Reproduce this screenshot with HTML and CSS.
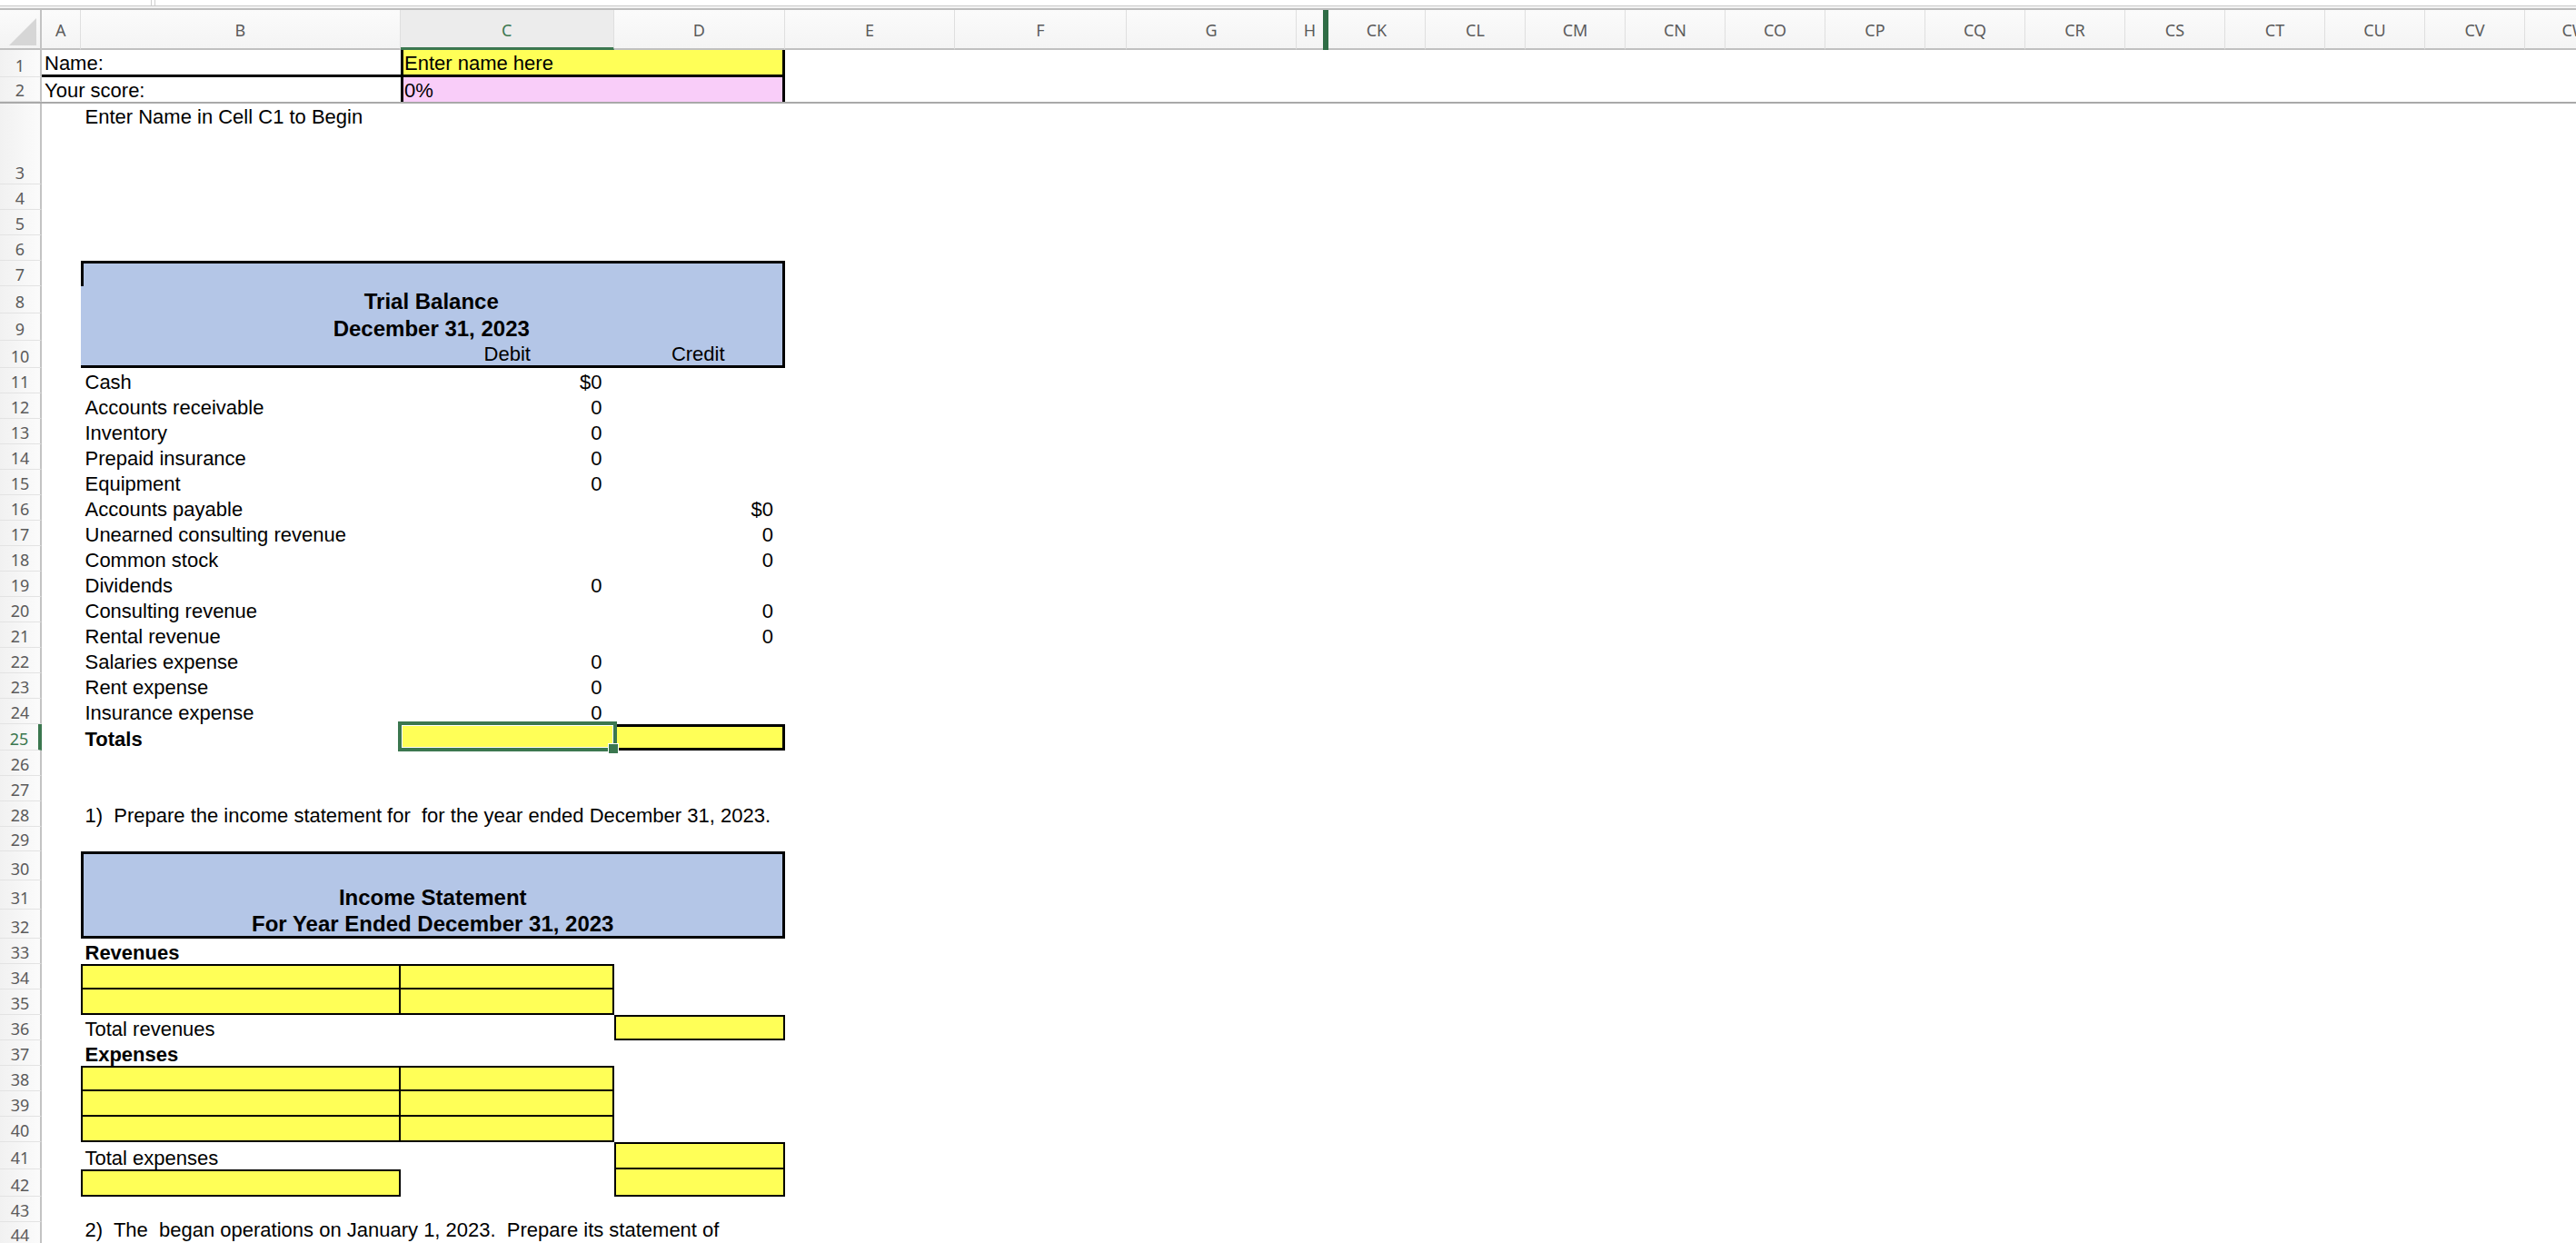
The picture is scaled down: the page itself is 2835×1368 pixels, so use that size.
FILE: index.html
```html
<!DOCTYPE html>
<html>
<head>
<meta charset="utf-8">
<link rel="stylesheet" href="styles.css">
</head>
<body>
<div class="app">
  <div class="topbar"><div class="tb-gap"></div><div class="tb-box"></div></div>
  <div class="frame"></div>
  <div class="colhead">
    <div class="corner"><svg width="46" height="42" viewBox="0 0 46 42"><polygon points="40,9 40,39 10,39" fill="#d6d6d6"/></svg></div>
    <div class="ch w-a">A</div>
    <div class="ch w-b">B</div>
    <div class="ch w-c sel">C</div>
    <div class="ch w-d">D</div>
    <div class="ch w-e">E</div>
    <div class="ch w-f">F</div>
    <div class="ch w-g">G</div>
    <div class="ch w-h">H</div>
    <div class="freeze-v"></div>
    <div class="ch w-ck">CK</div>
    <div class="ch w-x">CL</div>
    <div class="ch w-x">CM</div>
    <div class="ch w-x">CN</div>
    <div class="ch w-x">CO</div>
    <div class="ch w-x">CP</div>
    <div class="ch w-x">CQ</div>
    <div class="ch w-x">CR</div>
    <div class="ch w-x">CS</div>
    <div class="ch w-x">CT</div>
    <div class="ch w-x">CU</div>
    <div class="ch w-x">CV</div>
    <div class="ch w-x">CW</div>
  </div>

  <div class="sheet">
    <div class="r h30"><div class="rh">1</div><div class="cell ca pa bb3">Name:</div><div class="cell cb bb3"></div><div class="cell ccd yellow bl3 br3 bb3 pc">Enter name here</div></div>
    <div class="r h27"><div class="rh">2</div><div class="cell ca pa">Your score:</div><div class="cell ccd pink bl3 br3 pc">0%</div></div>
    <div class="freeze-h"></div>
    <div class="r h89"><div class="rh">3</div><div class="cell cb pb top">Enter Name in Cell C1 to Begin</div></div>
    <div class="r"><div class="rh">4</div></div>
    <div class="r"><div class="rh">5</div></div>
    <div class="r"><div class="rh">6</div></div>
    <div class="r"><div class="rh">7</div><div class="cell cbd blue hb-t hb-l hb-r"></div></div>
    <div class="r h30"><div class="rh">8</div><div class="cell cbd blue hb-r center title">Trial Balance</div></div>
    <div class="r h30"><div class="rh">9</div><div class="cell cbd blue hb-r center title">December 31, 2023</div></div>
    <div class="r h30"><div class="rh">10</div><div class="cell cb blue hb-b"></div><div class="cell cc blue hb-b center">Debit</div><div class="cell cd blue hb-b hb-r center">Credit</div></div>
    <div class="r"><div class="rh">11</div><div class="cell cb pb">Cash</div><div class="cell cc num">$0</div></div>
    <div class="r"><div class="rh">12</div><div class="cell cb pb">Accounts receivable</div><div class="cell cc num">0</div></div>
    <div class="r"><div class="rh">13</div><div class="cell cb pb">Inventory</div><div class="cell cc num">0</div></div>
    <div class="r"><div class="rh">14</div><div class="cell cb pb">Prepaid insurance</div><div class="cell cc num">0</div></div>
    <div class="r"><div class="rh">15</div><div class="cell cb pb">Equipment</div><div class="cell cc num">0</div></div>
    <div class="r"><div class="rh">16</div><div class="cell cb pb">Accounts payable</div><div class="cell cd num">$0</div></div>
    <div class="r"><div class="rh">17</div><div class="cell cb pb">Unearned consulting revenue</div><div class="cell cd num">0</div></div>
    <div class="r"><div class="rh">18</div><div class="cell cb pb">Common stock</div><div class="cell cd num">0</div></div>
    <div class="r"><div class="rh">19</div><div class="cell cb pb">Dividends</div><div class="cell cc num">0</div></div>
    <div class="r"><div class="rh">20</div><div class="cell cb pb">Consulting revenue</div><div class="cell cd num">0</div></div>
    <div class="r"><div class="rh">21</div><div class="cell cb pb">Rental revenue</div><div class="cell cd num">0</div></div>
    <div class="r"><div class="rh">22</div><div class="cell cb pb">Salaries expense</div><div class="cell cc num">0</div></div>
    <div class="r"><div class="rh">23</div><div class="cell cb pb">Rent expense</div><div class="cell cc num">0</div></div>
    <div class="r"><div class="rh">24</div><div class="cell cb pb">Insurance expense</div><div class="cell cc num">0</div></div>
    <div class="r h29"><div class="rh sel">25</div><div class="cell cb pb bold">Totals</div><div class="cell cc yellow active"><div class="selection"><div class="handle"></div></div></div><div class="cell cd tot"></div></div>
    <div class="r"><div class="rh">26</div></div>
    <div class="r"><div class="rh">27</div></div>
    <div class="r"><div class="rh">28</div><div class="cell cb pb">1)  Prepare the income statement for  for the year ended December 31, 2023.</div></div>
    <div class="r h27"><div class="rh">29</div></div>
    <div class="r h32"><div class="rh">30</div><div class="cell cbd blue hb-t hb-l hb-r"></div></div>
    <div class="r h32"><div class="rh">31</div><div class="cell cbd blue hb-l hb-r center title">Income Statement</div></div>
    <div class="r h32"><div class="rh">32</div><div class="cell cbd blue hb-l hb-r hb-b center title">For Year Ended December 31, 2023</div></div>
    <div class="r"><div class="rh">33</div><div class="cell cb pb bold">Revenues</div></div>
    <div class="r"><div class="rh">34</div><div class="cell cb inp"></div><div class="cell cc inp nl"></div></div>
    <div class="r"><div class="rh">35</div><div class="cell cb inp nt"></div><div class="cell cc inp nt nl"></div></div>
    <div class="r"><div class="rh">36</div><div class="cell cb pb">Total revenues</div><div class="cell cd inp"></div></div>
    <div class="r"><div class="rh">37</div><div class="cell cb pb bold">Expenses</div></div>
    <div class="r"><div class="rh">38</div><div class="cell cb inp"></div><div class="cell cc inp nl"></div></div>
    <div class="r"><div class="rh">39</div><div class="cell cb inp nt"></div><div class="cell cc inp nt nl"></div></div>
    <div class="r"><div class="rh">40</div><div class="cell cb inp nt"></div><div class="cell cc inp nt nl"></div></div>
    <div class="r h30"><div class="rh">41</div><div class="cell cb pb">Total expenses</div><div class="cell cd inp"></div></div>
    <div class="r h30"><div class="rh">42</div><div class="cell cb inp"></div><div class="cell cd inp nt"></div></div>
    <div class="r"><div class="rh">43</div></div>
    <div class="r"><div class="rh last">44</div><div class="cell cb pb top44">2)  The  began operations on January 1, 2023.  Prepare its statement of</div></div>
  </div>
</div>
</body>
</html>
```

FILE: styles.css
```css
* { box-sizing: border-box; }
html, body {
  margin: 0;
  padding: 0;
  width: 2835px;
  height: 1368px;
  overflow: hidden;
  background: #ffffff;
}
.app {
  width: 2835px;
  height: 1368px;
  overflow: hidden;
  font-family: "Liberation Sans", Arial, sans-serif;
  font-size: 22px;
  color: #000;
}

/* top chrome remnants */
.topbar { height: 6px; display: flex; background: #fff; }
.tb-gap { width: 166px; flex: none; }
.tb-box { width: 5px; flex: none; border-left: 1px solid #cfcfcf; border-right: 1px solid #cfcfcf; }
.frame {
  height: 5px;
  border-top: 1px solid #c9c9c9;
  border-bottom: 2px solid #bdbdbd;
  background: #f3f3f3;
}

/* column headers */
.colhead {
  display: flex;
  height: 44px;
  width: 2900px;
  font-family: "Noto Sans", "Open Sans", sans-serif;
  font-size: 18px;
  color: #5b5b5b;
}
.corner {
  width: 46px;
  flex: none;
  background: linear-gradient(#fbfbfb, #f3f3f3);
  border-right: 2px solid #c3c3c3;
  border-bottom: 2px solid #c0c0c0;
}
.corner svg { display: block; }
.ch {
  flex: none;
  display: flex;
  align-items: center;
  justify-content: center;
  line-height: 20px;
  background: linear-gradient(#fbfbfb, #f4f4f4);
  border-right: 1px solid #dfdfdf;
  border-bottom: 2px solid #c0c0c0;
  padding-top: 2px;
}
.ch.sel {
  background: #ececec;
  color: #3b774f;
  border-bottom: 3px solid #3b774f;
  padding-top: 3px;
}
.w-a { width: 42.5px; }
.w-b { width: 352.5px; }
.w-c { width: 234.5px; }
.w-d { width: 188.5px; }
.w-e { width: 187px; }
.w-f { width: 189px; }
.w-g { width: 187px; }
.w-h { width: 29px; border-right: 0; }
.w-ck { width: 107px; }
.w-x { width: 110px; }
.freeze-v { width: 6px; flex: none; background: #2f6d46; }

/* sheet rows */
.sheet { width: 2835px; }
.r {
  display: grid;
  grid-template-columns: 46px 42.5px 352.5px 234.5px 188.5px 1fr;
  height: 28px;
}
.r > * { grid-row: 1; }
.h27 { height: 27px; }
.h29 { height: 29px; }
.h30 { height: 30px; }
.h32 { height: 32px; }
.h89 { height: 89px; }

.freeze-h { height: 2px; background: #a9a9a9; }

.rh {
  grid-column: 1;
  display: flex;
  justify-content: center;
  align-items: flex-end;
  padding-bottom: 2px;
  font-family: "Noto Sans", "Open Sans", sans-serif;
  font-size: 18px;
  line-height: 20px;
  color: #5b5b5b;
  background: linear-gradient(to right, #f1f1f1, #fbfbfb);
  border-right: 2px solid #c3c3c3;
  border-bottom: 1px solid #e3e3e3;
}
.rh.last { padding-bottom: 3px; }
.rh.sel {
  color: #3b774f;
  border-right: 4px solid #3b774f;
}

.cell {
  display: flex;
  align-items: flex-end;
  line-height: 25px;
  white-space: pre;
  min-width: 0;
}
.ca { grid-column: 2; }
.cb { grid-column: 3; }
.cc { grid-column: 4; }
.cd { grid-column: 5; }
.cbd { grid-column: 3 / 6; }
.ccd { grid-column: 4 / 6; }

.pa { padding-left: 3px; }
.pb { padding-left: 5px; }
.pc { padding-left: 1px; }
.top { align-items: flex-start; padding-top: 2px; }
.top44 { align-items: flex-start; line-height: 18px; }
.center { justify-content: center; }
.num { justify-content: flex-end; padding-right: 13px; }
.bold { font-weight: bold; }
.title { font-weight: bold; font-size: 24px; padding-bottom: 1px; }

.yellow { background: #ffff57; }
.pink { background: #f9cdf9; }
.blue { background: #b4c6e7; }

.bb3 { border-bottom: 3px solid #000; }
.bl3 { border-left: 3px solid #000; }
.br3 { border-right: 3px solid #000; }

.hb-t { border-top: 3px solid #000; }
.hb-l { border-left: 3px solid #000; }
.hb-r { border-right: 3px solid #000; }
.hb-b { border-bottom: 3px solid #000; }

.inp { background: #ffff57; border: 2px solid #000; }
.inp.nt { border-top: 0; }
.inp.nl { border-left: 0; }

.tot { background: #ffff57; border: 3px solid #000; }

/* active cell selection */
.active { position: relative; }
.selection {
  position: absolute;
  top: -3px;
  left: -3px;
  right: -3px;
  bottom: -1px;
  border: 4px solid #3b774f;
  box-shadow: inset 0 0 0 1px #ffffff;
  z-index: 2;
}
.handle {
  position: absolute;
  right: -6px;
  bottom: -7px;
  width: 12px;
  height: 12px;
  background: #3b774f;
  border: 1px solid #ffffff;
}
```
